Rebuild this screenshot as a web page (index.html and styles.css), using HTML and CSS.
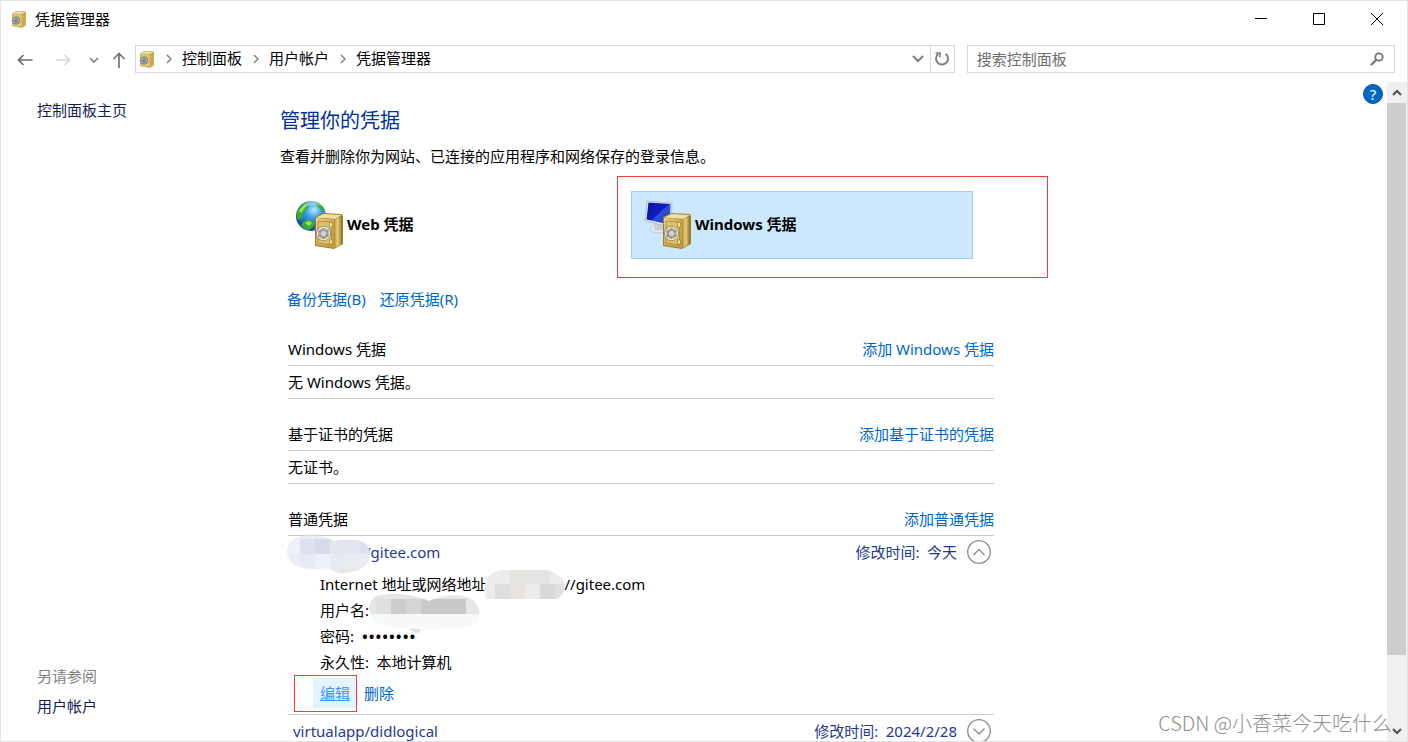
FILE: index.html
```html
<!DOCTYPE html>
<html lang="zh-CN">
<head>
<meta charset="utf-8">
<title>凭据管理器</title>
<link rel="stylesheet" href="styles.css">
</head>
<body>
<svg class="defs" aria-hidden="true">
  <defs>
    <linearGradient id="gold" x1="0" y1="0" x2="1" y2="1"><stop offset="0" stop-color="#ead792"/><stop offset=".5" stop-color="#d0ad51"/><stop offset="1" stop-color="#c29c3c"/></linearGradient>
    <linearGradient id="side" x1="0" y1="0" x2="1" y2="0"><stop offset="0" stop-color="#c79f3c"/><stop offset=".45" stop-color="#e6cd83"/><stop offset="1" stop-color="#93701d"/></linearGradient>
    <radialGradient id="sea" cx=".6" cy=".3" r=".75"><stop offset="0" stop-color="#b5ecff"/><stop offset=".35" stop-color="#3b9ee8"/><stop offset="1" stop-color="#10368e"/></radialGradient>
    <linearGradient id="screen" x1="0" y1="0" x2="1" y2="1"><stop offset="0" stop-color="#0614a0"/><stop offset=".5" stop-color="#0d1fc0"/><stop offset=".52" stop-color="#2e4fdd"/><stop offset="1" stop-color="#1a34d0"/></linearGradient>
    <symbol id="safe" viewBox="0 0 30 38">
      <path d="M1 5 9 1l19 1 1 2v28l-9 5-19-3z" fill="#a07f2c"/>
      <path d="M2 5.500 9.500 2 28 3l-7 4z" fill="#f0dfa4"/>
      <path d="M2 6l18 1.500V36L2 33z" fill="url(#gold)"/>
      <path d="M20.500 7.500 28 4v28l-7.500 4z" fill="url(#side)"/>
      <path d="M4 9l13.500 1v23L4 31z" fill="#dcc06c" stroke="#a88838" stroke-width=".8"/>
      <path d="M15.500 10.500h3V15h-3zM15.500 28h3v4h-3z" fill="#f5e6ac" stroke="#8e6d20" stroke-width=".6"/>
      <circle cx="9.500" cy="21.500" r="7" fill="#a3a3a6" stroke="#77787e" stroke-width=".8"/>
      <circle cx="9.500" cy="21.500" r="6" fill="#b9a566" stroke="#e9e9ed" stroke-width="1.300"/>
      <path d="M9.500 16v11M4.500 19l10 5M14.500 18.500l-10 6" stroke="#8f9096" stroke-width="1.500"/>
      <circle cx="9.500" cy="21.500" r="3" fill="#d4d4da" stroke="#8b8c92" stroke-width=".6"/>
    </symbol>
    <symbol id="safe-small" viewBox="0 0 16 18">
      <path d="M1 3.500 5 1l9 .5 1 1V15l-4 3-10-2z" fill="#c6a65a"/>
      <path d="M1.500 3.500 5 1.500l9 .5-3 2z" fill="#f0dfa8"/>
      <path d="M1.500 4 10.500 4.500v12.500L1.500 15.500z" fill="#dcc57f"/>
      <path d="M11 4.500l3.500-2V15L11 17z" fill="#cda94d"/>
      <circle cx="5" cy="10.500" r="3.700" fill="#b8b8ba" stroke="#7c7c80"/>
      <path d="M5 7.500v6M2.500 9.500l5 2.500M7.500 9l-5 3" stroke="#66666c" stroke-width=".8"/>
    </symbol>
  </defs>
</svg>

<div class="window">
  <header class="titlebar">
    <svg class="app-icon"><use href="#safe-small"/></svg>
    <h1 class="window-title">凭据管理器</h1>
    <div class="window-buttons">
      <button class="win-btn" aria-label="最小化"><svg width="12" height="12" viewBox="0 0 12 12"><path d="M0 5.500h12" stroke="#000"/></svg></button>
      <button class="win-btn" aria-label="最大化"><svg width="12" height="12" viewBox="0 0 12 12"><path d="M.5.500h11v11H.5z" fill="none" stroke="#000"/></svg></button>
      <button class="win-btn" aria-label="关闭"><svg width="12" height="12" viewBox="0 0 12 12"><path d="M0 0l12 12M12 0 0 12" stroke="#000"/></svg></button>
    </div>
  </header>

  <nav class="toolbar">
    <div class="history">
      <button class="nav-btn back" aria-label="返回"><svg width="16" height="12" viewBox="0 0 16 12"><path d="M15.500 6H1.500M6.500 1l-5 5 5 5" fill="none" stroke="#6d6d6d" stroke-width="1.700"/></svg></button>
      <button class="nav-btn forward" aria-label="前进"><svg width="16" height="12" viewBox="0 0 16 12"><path d="M.5 6h14M9.500 1l5 5-5 5" fill="none" stroke="#dadada" stroke-width="1.700"/></svg></button>
      <button class="nav-btn recent" aria-label="最近浏览的位置"><svg width="10" height="8" viewBox="0 0 10 8"><path d="M1 2l4 4 4-4" fill="none" stroke="#808080" stroke-width="1.700"/></svg></button>
      <button class="nav-btn up" aria-label="上移"><svg width="14" height="16" viewBox="0 0 14 16"><path d="M7 16V2M1.500 7 7 1.500 12.500 7" fill="none" stroke="#747474" stroke-width="1.700"/></svg></button>
    </div>
    <div class="address">
      <svg class="app-icon"><use href="#safe-small"/></svg>
      <svg class="crumb-arrow" viewBox="0 0 6 10"><path d="M1 1l4 4-4 4"/></svg>
      <a class="crumb" href="#">控制面板</a>
      <svg class="crumb-arrow" viewBox="0 0 6 10"><path d="M1 1l4 4-4 4"/></svg>
      <a class="crumb" href="#">用户帐户</a>
      <svg class="crumb-arrow" viewBox="0 0 6 10"><path d="M1 1l4 4-4 4"/></svg>
      <a class="crumb" href="#">凭据管理器</a>
      <button class="address-btn drop" aria-label="以前的位置"><svg width="12" height="8" viewBox="0 0 12 8"><path d="M1 1l5 5 5-5" fill="none" stroke="#808080" stroke-width="2"/></svg></button>
      <button class="address-btn refresh" aria-label="刷新"><svg width="16" height="16" viewBox="0 0 16 16"><path d="M11.500 2.700a6 6 0 1 1-7.400.3" fill="none" stroke="#7c7c7c" stroke-width="1.900"/><path d="M1.500 2H6v4.500" fill="none" stroke="#7c7c7c" stroke-width="1.600"/></svg></button>
    </div>
    <label class="search">
      <input class="search-input" type="text" placeholder="搜索控制面板" aria-label="搜索控制面板">
      <svg width="14" height="14" viewBox="0 0 14 14"><circle cx="9" cy="5" r="3.700" fill="none" stroke="#757575" stroke-width="1.800"/><path d="M6.300 7.700.8 13.200" stroke="#757575" stroke-width="2"/></svg>
    </label>
  </nav>

  <div class="body">
    <aside class="sidebar">
      <a class="side-link" href="#">控制面板主页</a>
      <div class="see-also">
        <h2 class="see-also-title">另请参阅</h2>
        <a class="side-link" href="#">用户帐户</a>
      </div>
    </aside>

    <main class="main">
      <h2 class="page-title">管理你的凭据</h2>
      <p class="intro">查看并删除你为网站、已连接的应用程序和网络保存的登录信息。</p>

      <div class="tiles">
        <button class="tile">
          <svg class="tile-icon" viewBox="0 0 48 50">
            <circle cx="15" cy="16" r="15" fill="url(#sea)"/>
            <path d="M1 12C4 5 9 2 13 2l-2 4 1 2-5 5 0 4-4 3-2-2zM7 22l5-3 6 3 0 4-5 4C9 30 6 27 5 25zM20 2c4 1 7 4 9 8l-3 1-5-5zM27 15l2 3-2 4z" fill="#37ad39"/>
            <path d="M3 11c2-4 5-6 8-7l-2 4-4 5zM9 23l4-2 3 2-3 3z" fill="#9be05b"/>
            <path d="M15 1c5 0 9 2 11 5-6-2-15-1-20 2 2-4 5-7 9-7z" fill="#fff" opacity=".35"/>
            <use href="#safe" x="18" y="12" width="30" height="38"/>
          </svg>
          <span>Web 凭据</span>
        </button>
        <button class="tile selected">
          <svg class="tile-icon" viewBox="0 0 48 50">
            <ellipse cx="14" cy="29" rx="8" ry="4" fill="#e2e5ea" stroke="#b2b7c0" stroke-width=".6"/>
            <path d="M10 22l9 2v6h-8z" fill="#c9cdd5"/>
            <path d="M3 1l25 2-1 24L1 21z" fill="#e3e6eb" stroke="#a6acb8" stroke-width=".7"/>
            <path d="M4.500 2.500 26.500 4l-1 20.500L2.500 19.500z" fill="url(#screen)"/>
            <use href="#safe" x="18" y="12" width="30" height="38"/>
          </svg>
          <span>Windows 凭据</span>
        </button>
      </div>

      <div class="vault-links">
        <a class="link" href="#">备份凭据(B)</a>
        <a class="link" href="#">还原凭据(R)</a>
      </div>

      <section class="group">
        <div class="group-head"><h3 class="group-title">Windows 凭据</h3><a class="link" href="#">添加 Windows 凭据</a></div>
        <p class="empty">无 Windows 凭据。</p>
      </section>

      <section class="group">
        <div class="group-head"><h3 class="group-title">基于证书的凭据</h3><a class="link" href="#">添加基于证书的凭据</a></div>
        <p class="empty">无证书。</p>
      </section>

      <section class="group">
        <div class="group-head"><h3 class="group-title">普通凭据</h3><a class="link" href="#">添加普通凭据</a></div>
        <article class="entry">
          <div class="entry-head">
            <div class="entry-name masked">
              <svg class="mask-name" viewBox="0 -3 83 44" aria-hidden="true">
                <clipPath id="m1"><path d="M16 3Q32 1 48 8Q72 4 80 12Q86 22 80 31Q72 39 66 38Q54 43 46 37L40 36Q20 37 10 33Q0 28 0 18Q1 6 16 3z"/></clipPath>
                <g clip-path="url(#m1)"><path fill="#ececf3" d="M0 0h83v44H0z"/><path fill="#dfe1ee" d="M13 6h15v15H13z"/><path fill="#d7dbe9" d="M28 6h15v15H28z"/><path fill="#e3e5ef" d="M43 6h30v15H43z"/><path fill="#dfe0ee" d="M73 6h10v15H73z"/><path fill="#e7e9f4" d="M13 21h15v15H13zM43 21h15v15H43z"/><path fill="#f0f1f8" d="M28 21h15v15H28zM0 6h13v15H0z"/><path fill="#e8e8e8" d="M0 36h83v8H0z"/></g>
              </svg>
              <span>/gitee.com</span>
            </div>
            <span class="modified">修改时间:&ensp;今天</span>
            <button class="toggle" aria-label="折叠"><svg width="24" height="24" viewBox="0 0 24 24"><circle cx="12" cy="12" r="11.300"/><path d="M6.500 15 12 9.500l5.500 5.500"/></svg></button>
          </div>
          <div class="details">
            <div class="detail"><span>Internet 地址或网络地址</span>
              <svg class="mask-address" viewBox="0 0 81 30" aria-hidden="true">
                <clipPath id="m2"><path d="M0 22Q1 4 17 1h45q18 5 19 16-1 9-8 13H2z"/></clipPath>
                <g clip-path="url(#m2)"><path fill="#ececed" d="M0 0h81v30H0z"/><path fill="#e3e3df" d="M26 0h15v15H26z"/><path fill="#e2e3e5" d="M41 0h25v15H41z"/><path fill="#dedede" d="M11 15h15v15H11z"/><path fill="#e6e3e0" d="M26 15h15v15H26z"/><path fill="#d9d9db" d="M56 15h15v15H56z"/><path fill="#e0e0e2" d="M71 15h10v15H71z"/></g>
              </svg>
              <span>//gitee.com</span></div>
            <div class="detail"><span>用户名:</span>
              <svg class="mask-user" viewBox="0 0 111 46" aria-hidden="true">
                <clipPath id="m3"><path d="M12 8Q36 4 60 14Q86 3 104 13Q112 22 110 31Q106 40 94 41Q86 43 82 41Q60 44 52 42L50 46Q40 44 40 41Q18 41 6 35Q-1 24 0 19Q2 9 12 8z"/></clipPath>
                <g clip-path="url(#m3)"><path fill="#e5e7e7" d="M0 0h111v28H0z"/><path fill="#e0e0de" d="M7 12h15v15H7z"/><path fill="#cdcdce" d="M22 12h15v15H22z"/><path fill="#d5d5d6" d="M37 12h15v15H37z"/><path fill="#c8c9ca" d="M52 12h45v15H52z"/><path fill="#f7f8f8" d="M0 27h111v15H0z"/><path fill="#dfdfdf" d="M36 42h20v4H36z"/></g>
              </svg></div>
            <div class="detail"><span>密码:&ensp;</span><span class="dots">••••••••</span></div>
            <div class="detail"><span>永久性:&ensp;本地计算机</span></div>
            <div class="actions"><a class="link edit" href="#">编辑</a><a class="link" href="#">删除</a></div>
          </div>
        </article>
        <article class="entry">
          <div class="entry-head">
            <div class="entry-name">virtualapp/didlogical</div>
            <span class="modified">修改时间:&ensp;2024/2/28</span>
            <button class="toggle" aria-label="展开"><svg width="24" height="24" viewBox="0 0 24 24"><circle cx="12" cy="12" r="11.300"/><path d="M6.500 9.500 12 15l5.500-5.500"/></svg></button>
          </div>
        </article>
      </section>
    </main>

    <button class="help" aria-label="帮助">?</button>

    <div class="scrollbar">
      <button class="scroll-btn" aria-label="向上滚动"><svg width="10" height="8" viewBox="0 0 10 8"><path d="M1 6l4-4 4 4" fill="none" stroke="#505050" stroke-width="2"/></svg></button>
      <div class="track"><div class="thumb"></div></div>
      <button class="scroll-btn" aria-label="向下滚动"><svg width="10" height="8" viewBox="0 0 10 8"><path d="M1 2l4 4 4-4" fill="none" stroke="#505050" stroke-width="2"/></svg></button>
    </div>
  </div>
  <div class="watermark">CSDN @小香菜今天吃什么</div>
  <svg class="edge edge-top" viewBox="0 0 1408 1" preserveAspectRatio="none" aria-hidden="true"><path d="M53 .5h2m8 0h2m54 0h2m6 0h2m51 0h5m49 0h10m331 0h2m9 0h2m50 0h3m3 0h4m136 0h2m16 0h2m175 0h2m12 0h2m48 0h3m4 0h3m37 0h2m15 0h2m104 0h3m48 0h2m16 0h2m101 0h2" stroke="#4d4861"/><path d="M361 .5h18m45 0h18m55 0h19m200 0h17m132 0h19m39 0h18m212 0h19" stroke="#7d7890"/></svg>
  <svg class="edge edge-bottom" viewBox="0 0 1408 1" preserveAspectRatio="none" aria-hidden="true"><path d="M1097 .5h101" stroke="#e8573a"/></svg>
</div>
</body>
</html>
```
FILE: styles.css
```css
* { box-sizing: border-box; }
body, h1, h2, h3, p { margin: 0; }
body {
  font: 15px/24px "Noto Sans", "Noto Sans CJK SC", sans-serif;
  color: #000;
  background: #fff;
}
h1, h2, h3 { font-size: 15px; font-weight: 400; }
button { font: inherit; color: inherit; background: none; border: 0; padding: 0; }
a { color: inherit; text-decoration: none; }
svg { display: block; flex: none; }
.defs { position: absolute; width: 0; height: 0; }

.window {
  position: relative;
  display: flex;
  flex-direction: column;
  height: 100vh;
  overflow: hidden;
  border: 1px solid #e3e3e5;
}
.edge { position: absolute; left: -1px; width: 100vw; height: 1px; }
.edge-top { top: -1px; }
.edge-bottom { bottom: -1px; }

.titlebar { display: flex; align-items: center; height: 37px; padding: 0 1px 2px 10px; flex: none; }
.app-icon { width: 16px; height: 18px; }
.window-title { margin-left: 8px; }
.window-buttons { display: flex; margin-left: auto; }
.win-btn { display: grid; place-items: center; width: 58px; height: 35px; }

.toolbar { display: flex; height: 28px; margin: 7px 12px 0 0; flex: none; }
.history { display: flex; width: 134px; padding: 2px 0 0 16px; flex: none; align-items: center; }
.forward { margin-left: 22px; }
.recent { margin-left: 18px; }
.up { margin-left: 13px; }
.address { display: flex; align-items: center; flex: 814; border: 1px solid #d9d9d9; padding-left: 3px; }
.crumb { padding-bottom: 2px; }
.crumb-arrow { width: 6px; height: 10px; margin: 0 10px 0 11px; fill: none; stroke: #808080; stroke-width: 1.5; }
.address-btn { display: grid; place-items: center; width: 24px; height: 26px; }
.drop { margin-left: auto; }
.refresh { border-left: 1px solid #d9d9d9; }
.search { display: flex; align-items: center; flex: 407; margin-left: 12px; padding: 0 10px 0 9px; border: 1px solid #d9d9d9; }
.search-input { flex: 1; min-width: 0; border: 0; outline: 0; padding: 0; font: inherit; background: none; }
.search-input::placeholder { color: #6d6d6d; opacity: 1; }

.body { position: relative; display: flex; flex: 1; min-height: 0; margin-top: 9px; }
.sidebar { display: flex; flex-direction: column; justify-content: space-between; width: 279px; padding: 16px 0 23px 36px; flex: none; color: #151c55; }
.side-link { display: block; }
.see-also-title { color: #808080; margin-bottom: 6px; }

.main { flex: 1; min-width: 0; padding-top: 27px; overflow: hidden; }
.page-title { font-size: 20px; color: #003399; }
.intro { margin-top: 11px; }
.tiles { display: grid; grid-template-columns: repeat(2, 342px); gap: 6px; margin: 23px 0 0 3px; }
.tile { position: relative; display: flex; align-items: center; gap: 3px; height: 68px; padding: 0 12px; border: 1px solid transparent; font-weight: 700; }
.tile span { padding-bottom: 2px; }
.tile-icon { width: 48px; height: 50px; }
.selected { background: #cce8ff; border-color: #99d1ff; }
.selected::after, .edit::after { content: ""; position: absolute; border: 1px solid #f23c3c; }
.selected::after { inset: -16px -76px -20px -15px; }
.vault-links { display: flex; gap: 14px; margin: 28px 0 0 7px; }
.link { color: #0066cc; }

.group { max-width: 706px; margin: 23px 0 0 8px; }
.vault-links + .group { margin-top: 26px; }
.group-head { display: flex; justify-content: space-between; padding-bottom: 4px; border-bottom: 1px solid #cacaca; }
.empty { padding: 4px 0; border-bottom: 1px solid #cacaca; }
.entry { border-bottom: 1px solid #cacaca; }
.entry-head { display: flex; align-items: center; height: 33px; padding: 0 3px 2px 5px; color: #1f3a93; }
.entry-name { display: flex; align-items: center; margin-right: auto; }
.masked { margin-left: -6px; }
.toggle { margin-left: 10px; }
.toggle svg { fill: none; stroke: #8e8e8e; stroke-width: 1.3; }
.mask-name { width: 83px; height: 44px; }
.masked span { margin-left: -5px; }
.mask-name, .mask-address, .mask-user { position: relative; z-index: 1; }
.details { padding: 2px 0 6px 32px; }
.detail { display: flex; align-items: center; height: 26px; }
.mask-address { width: 81px; height: 30px; margin: 0 -1px 0 -2px; }
.mask-user { width: 111px; height: 46px; }
.dots { font-size: 18px; }
.actions { display: flex; align-items: center; gap: 7px; margin: 3px 0 0 -7px; }
.edit { position: relative; padding: 3px 7px; color: #3399ff; background: #e5f3ff; text-decoration: underline; }
.edit::after { inset: -3px 0 -4px -19px; }

.help { position: absolute; top: 2px; right: 24px; width: 20px; height: 20px; border: 1px solid #0a4f96; border-radius: 50%; background: #0067c8; color: #fff; font-size: 15px; line-height: 18px; }
.scrollbar { display: flex; flex-direction: column; width: 20px; flex: none; background: #f0f0f0; }
.scroll-btn { display: grid; place-items: center; height: 21px; }
.track { flex: 1; }
.thumb { height: 89.5%; width: 19px; background: #cdcdcd; }
.watermark { position: absolute; right: 15px; bottom: 4px; font-family: "Noto Sans CJK SC", sans-serif; font-size: 20px; line-height: 28px; font-weight: 300; color: #8f8f8f; }
```
